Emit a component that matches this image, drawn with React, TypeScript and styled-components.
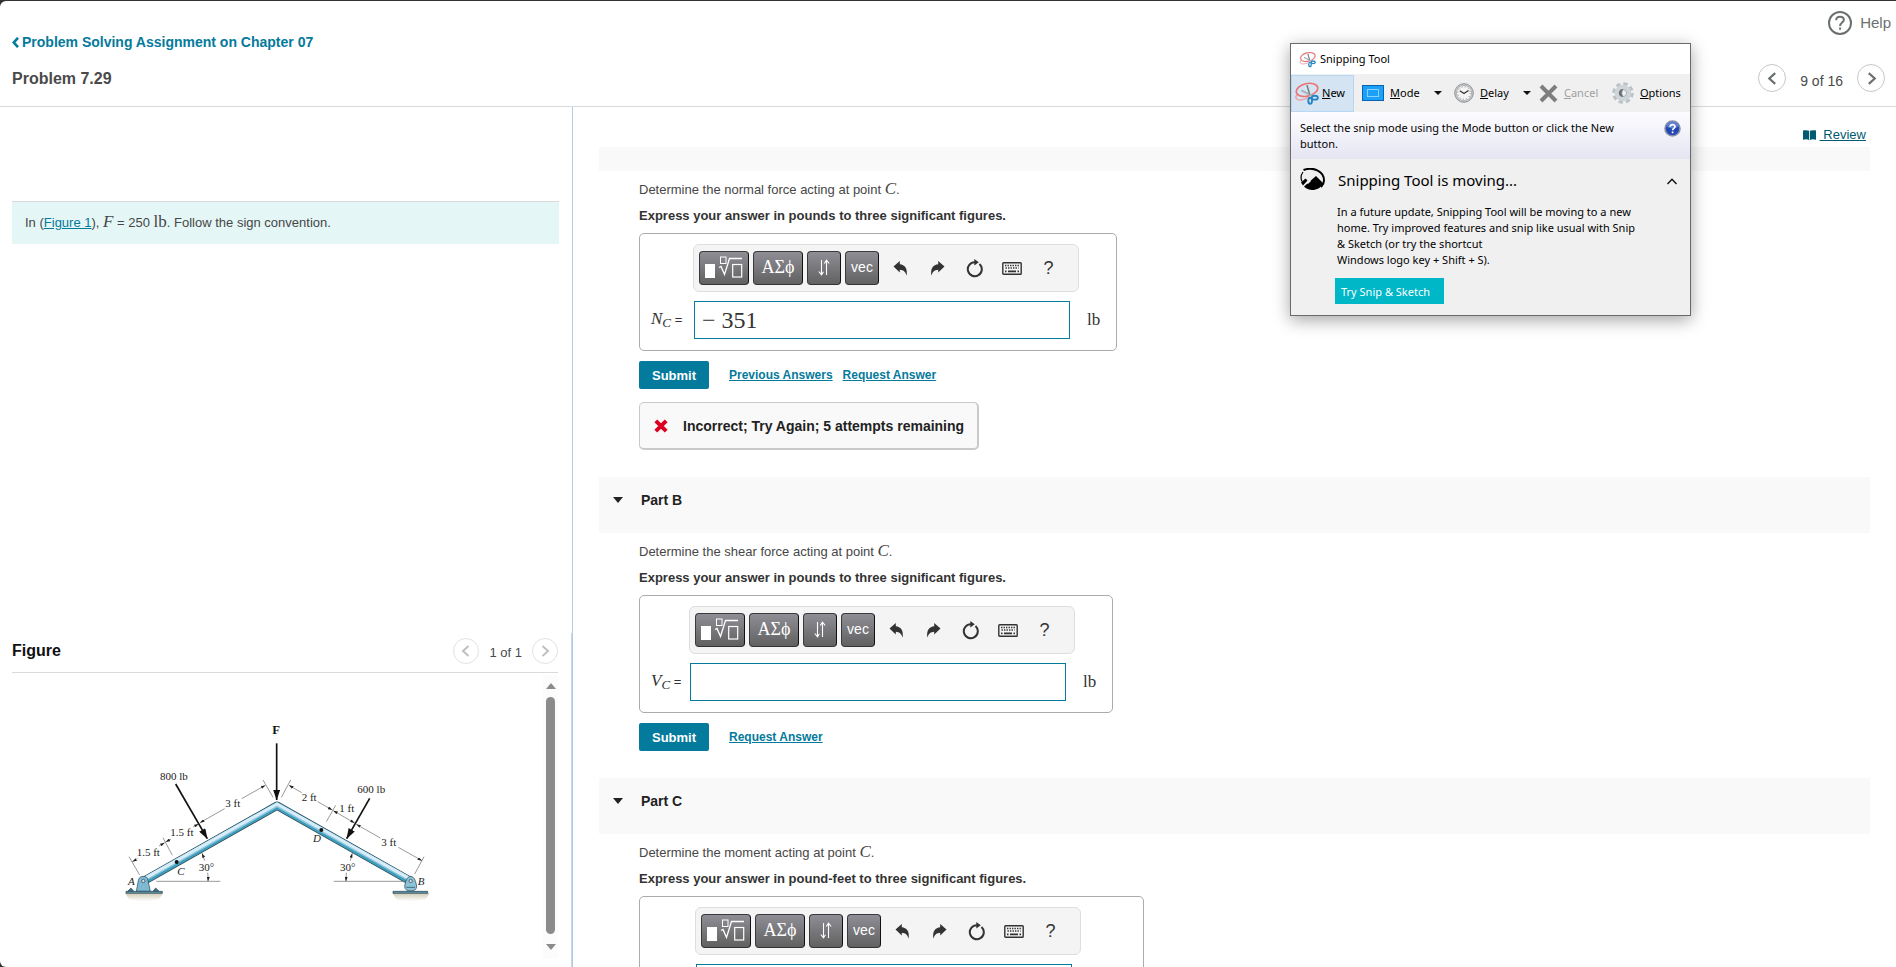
import React from 'react';
import styled, { createGlobalStyle } from 'styled-components';

const sans = `"Liberation Sans", Arial, sans-serif`;
const serif = `"Liberation Serif", "Times New Roman", serif`;
const teal = '#047a9c';

const GlobalStyle = createGlobalStyle`
  *, *::before, *::after { box-sizing: border-box; }
  body { margin: 0; background: #33302f; font-family: ${sans}; color: #333; }
  button, input { font-family: inherit; }
  h1, h2, h3, p { margin: 0; }
`;

const Page = styled.div`
  display: flex;
  flex-direction: column;
  height: 100vh;
  overflow: hidden;
  border-top: 1px solid #33302f;
`;

const Sheet = styled.div`
  display: flex;
  flex-direction: column;
  flex: 1;
  min-height: 0;
  overflow: hidden;
  background: #fff;
  border-radius: 6px 0 0 6px;
`;

const Header = styled.header`
  display: flex;
  justify-content: space-between;
  flex: none;
  height: 106px;
  border-bottom: 1px solid #dadada;
`;

const HeaderTitles = styled.div`
  padding: 32px 0 0 12px;
`;

const BackLink = styled.a`
  display: flex;
  align-items: center;
  gap: 3px;
  height: 18px;
  font-size: 14px;
  line-height: 18px;
  font-weight: bold;
  color: ${teal};
  text-decoration: none;
`;

const ProblemTitle = styled.h1`
  margin-top: 18px;
  font-size: 16px;
  line-height: 20px;
  color: #4a4a4a;
`;

const HeaderTools = styled.div`
  display: flex;
  flex-direction: column;
  align-items: flex-end;
  gap: 29px;
  padding-top: 10px;
`;

const HelpLink = styled.a`
  display: flex;
  align-items: center;
  gap: 8px;
  padding-right: 5px;
  font-size: 15px;
  line-height: 24px;
  color: #6a7070;
  text-decoration: none;
`;

const Pager = styled.nav<{ $small?: boolean }>`
  display: flex;
  align-items: center;
  gap: ${(p) => (p.$small ? 10 : 14)}px;
  padding-right: ${(p) => (p.$small ? 0 : 11)}px;
  font-size: ${(p) => (p.$small ? 13 : 14)}px;
  line-height: 20px;
  color: #4a4a4a;
`;

const PagerText = styled.span`
  padding-top: 5px;
`;

const RoundButton = styled.button<{ $small?: boolean }>`
  display: flex;
  align-items: center;
  justify-content: center;
  width: ${(p) => (p.$small ? 26 : 28)}px;
  height: ${(p) => (p.$small ? 26 : 28)}px;
  padding: 0;
  border: 1px solid ${(p) => (p.$small ? '#e2e2e2' : '#c7c7c7')};
  border-radius: 50%;
  background: #fff;
  color: ${(p) => (p.$small ? '#c0c0c0' : '#6a7070')};
`;

const Columns = styled.div`
  display: grid;
  grid-template-columns: minmax(0, 573fr) minmax(0, 1323fr);
  flex: 1;
  min-height: 0;
`;

const LeftColumn = styled.aside`
  display: flex;
  flex-direction: column;
  min-height: 0;
  border-right: 1px solid #b5cbdf;
`;

const Statement = styled.div`
  flex: 1;
  padding: 94px 13px 0 12px;
`;

const StatementText = styled.p`
  padding: 9px 13px;
  border-top: 1px solid #dadada;
  background: #e5f6f6;
  font-size: 13px;
  line-height: 24px;
  color: #464646;
`;

const InlineLink = styled.a`
  color: ${teal};
`;

const MathText = styled.span<{ $italic?: boolean }>`
  font-family: ${serif};
  font-size: 17px;
  line-height: 16px;
  font-style: ${(p) => (p.$italic ? 'italic' : 'normal')};
`;

const FigureSection = styled.section`
  display: flex;
  flex-direction: column;
  flex: 0 0 334px;
  padding: 0 13px 8px 12px;
  border-right: 1px solid #c3d5e6;
`;

const FigureHeader = styled.div`
  display: flex;
  align-items: center;
  justify-content: space-between;
  height: 40px;
  padding-bottom: 4px;
  border-bottom: 1px solid #dadada;
`;

const FigureTitle = styled.h2`
  font-size: 16px;
  line-height: 20px;
  color: #111;
`;

const FigureBody = styled.div`
  display: flex;
  flex: 1;
  min-height: 0;
  padding-top: 2px;
`;

const FigureCanvas = styled.div`
  flex: 1;
  padding-top: 35px;
  text-align: center;
`;

const ScrollTrack = styled.div`
  display: flex;
  flex-direction: column;
  align-items: center;
  justify-content: space-between;
  width: 15px;
  padding: 8px 0 9px;
  background: #fcfcfc;
`;

const ScrollThumb = styled.div`
  flex: 1;
  width: 9px;
  margin: 8px 0 10px;
  border-radius: 5px;
  background: #8b8b8b;
`;

const Main = styled.main`
  min-width: 0;
  padding: 0 26px;
  overflow: hidden;
`;

const ReviewRow = styled.div`
  display: flex;
  align-items: center;
  justify-content: flex-end;
  height: 40px;
  padding: 15px 4px 0 0;
`;

const ReviewLink = styled.a`
  display: flex;
  align-items: center;
  gap: 4px;
  font-size: 13px;
  line-height: 20px;
  color: #005a70;
  span { text-decoration: underline; white-space: pre; }
`;

const PartBand = styled.div<{ $short?: boolean }>`
  display: flex;
  height: ${(p) => (p.$short ? 24 : 56)}px;
  padding: 13px 14px 0;
  background: #f9f9f9;
`;

const PartToggle = styled.button`
  display: flex;
  align-items: center;
  gap: 18px;
  height: 20px;
  padding: 0;
  border: 0;
  background: none;
  font-size: 14px;
  line-height: 20px;
  font-weight: bold;
  color: #222;
`;

const PartBody = styled.section`
  padding: 6px 0 27px 40px;
`;

const Prompt = styled.p<{ $strong?: boolean }>`
  font-size: 13px;
  line-height: 26px;
  font-weight: ${(p) => (p.$strong ? 'bold' : 'normal')};
  color: ${(p) => (p.$strong ? '#333' : '#464646')};
`;

const AnswerBox = styled.div<{ $label: number }>`
  display: inline-grid;
  grid-template-columns: ${(p) => p.$label}px 377px auto;
  row-gap: 9px;
  align-items: center;
  margin-top: 4px;
  padding: 10px 0 11px;
  border: 1px solid #ababab;
  border-radius: 5px;
  vertical-align: top;
`;

const Toolbar = styled.div`
  grid-column: 2 / span 2;
  display: flex;
  align-items: center;
  gap: 4px;
  width: 386px;
  height: 48px;
  padding: 0 5px;
  border: 1px solid #dedede;
  border-radius: 6px;
  background: #f4f4f4;
`;

const PaletteButton = styled.button<{ $wide?: boolean; $serif?: boolean }>`
  display: flex;
  align-items: center;
  justify-content: center;
  width: ${(p) => (p.$wide ? 50 : 34)}px;
  height: 34px;
  padding: 0 0 2px;
  border: 1px solid #3a3a3c;
  border-right-color: #111;
  border-bottom-color: #333;
  border-radius: 4px;
  background: linear-gradient(#8f8e96, #616161);
  color: #fff;
  font-family: ${(p) => (p.$serif ? serif : sans)};
  font-size: ${(p) => (p.$serif ? 18 : 14)}px;
  line-height: 20px;
`;

const ToolButton = styled.button`
  display: flex;
  align-items: center;
  justify-content: center;
  width: 33px;
  height: 34px;
  padding: 0 0 0 2px;
  border: 0;
  background: none;
  color: #333;
  font-size: 18px;
  line-height: 20px;
`;

const AnswerLabel = styled.label`
  padding-left: 11px;
  font-size: 13px;
  line-height: 20px;
  white-space: nowrap;
  sub { font-size: 13px; line-height: 10px; vertical-align: -3px; }
`;

const AnswerInput = styled.input`
  height: 38px;
  min-width: 0;
  margin-left: 1px;
  padding: 0 7px;
  border: 1px solid ${teal};
  background: #fff;
  font-family: ${serif};
  font-size: 24px;
  color: #333;
`;

const Unit = styled.span`
  padding: 0 16px 0 17px;
  font-family: ${serif};
  font-size: 17px;
  line-height: 20px;
`;

const Actions = styled.div`
  display: flex;
  align-items: center;
  margin-top: 10px;
`;

const SubmitButton = styled.button`
  width: 70px;
  height: 28px;
  margin-right: 20px;
  padding: 0;
  border: 0;
  border-radius: 2px;
  background: ${teal};
  color: #fff;
  font-size: 13px;
  font-weight: bold;
`;

const ActionLink = styled.a`
  margin-right: 10px;
  font-size: 12px;
  line-height: 16px;
  font-weight: bold;
  color: ${teal};
`;

const Feedback = styled.div`
  display: flex;
  align-items: center;
  gap: 15px;
  width: fit-content;
  height: 48px;
  margin-top: 13px;
  padding: 1px 13px 0 14px;
  border: 1px solid #c9c9c9;
  border-right-width: 2px;
  border-bottom-width: 2px;
  border-radius: 5px;
  background: #f9f9f9;
  font-size: 14px;
  line-height: 20px;
  font-weight: bold;
  color: #222;
`;

/* Snipping Tool window */

const SnipWindow = styled.section`
  position: absolute;
  top: 43px;
  right: 205px;
  width: 401px;
  border: 1px solid #6a6a6a;
  background: #f0f0f0;
  box-shadow: 0 4px 16px rgba(0, 0, 0, 0.36);
  font-family: "Noto Sans", "Segoe UI", sans-serif;
  font-size: 11px;
  line-height: 16px;
  color: #000;
`;

const SnipTitle = styled.div`
  display: flex;
  align-items: center;
  gap: 4px;
  height: 30px;
  padding-left: 8px;
  background: #fff;
`;

const SnipToolbar = styled.div`
  display: flex;
  align-items: center;
  height: 38px;
`;

const SnipButton = styled.button<{ $width: number; $pad: number; $active?: boolean }>`
  display: flex;
  align-items: center;
  gap: ${(p) => (p.$active ? 3 : 6)}px;
  width: ${(p) => p.$width}px;
  height: 37px;
  padding: 0 0 0 ${(p) => p.$pad}px;
  border: ${(p) => (p.$active ? '1px solid #b7d6f2' : '0')};
  background: ${(p) => (p.$active ? '#d5e4f2' : 'none')};
  font-size: 11px;
  line-height: 16px;
  white-space: nowrap;
  color: #000;
  svg { flex: none; }
  &:disabled { color: #a0a0a0; }
`;

const SnipCaret = styled.span`
  margin-left: auto;
  border: 4px solid transparent;
  border-top-color: #111;
  border-bottom: 0;
`;

const SnipHint = styled.div`
  display: flex;
  justify-content: space-between;
  height: 47px;
  padding: 8px 9px 0;
  background: linear-gradient(#fdfdff, #e4e5f2);
`;

const SnipHintText = styled.p`
  width: 345px;
`;

const SnipBody = styled.div`
  display: grid;
  grid-template-columns: 35px 1fr 23px;
  padding: 9px 0 11px 9px;
`;

const SnipHeading = styled.h3`
  padding-left: 3px;
  font-size: 15px;
  line-height: 24px;
  font-weight: normal;
`;

const SnipCollapse = styled.button`
  width: 10px;
  height: 24px;
  padding: 0;
  border: 0;
  background: none;
`;

const SnipCopy = styled.p`
  grid-column: 2 / span 2;
  margin-top: 12px;
  padding-left: 2px;
`;

const SnipTry = styled.button`
  grid-column: 2;
  justify-self: start;
  width: 109px;
  height: 26px;
  margin-top: 10px;
  padding: 0 0 0 6px;
  border: 0;
  background: #00b7c7;
  color: #fff;
  font-size: 11px;
  text-align: left;
  white-space: nowrap;
`;

const Chevron = ({ right, size = 12 }: { right?: boolean; size?: number }) => (
  <svg width={size} height={size} viewBox="0 0 12 12" fill="none" stroke="currentColor" strokeWidth="2" aria-hidden="true">
    <path d={right ? 'M3.5 1 9 6 3.5 11' : 'M8.5 1 3 6 8.5 11'} />
  </svg>
);

const BackIcon = () => (
  <svg width="7" height="11" viewBox="0 0 7 11" fill="none" stroke="currentColor" strokeWidth="2.6" aria-hidden="true">
    <path d="M6 .8 1.8 5.5 6 10.2" />
  </svg>
);

const HelpIcon = () => (
  <svg width="24" height="24" viewBox="0 0 24 24" fill="none" stroke="#6a7070" aria-hidden="true">
    <circle cx="12" cy="12" r="11" strokeWidth="2" />
    <path d="M8.2 9.2C8.2 6.9 9.8 5.7 12 5.7s3.8 1.3 3.8 3.2c0 2.6-3.7 2.7-3.7 6" strokeWidth="2" />
    <path d="M12.1 16.6v2.2" strokeWidth="2" />
  </svg>
);

const BookIcon = () => (
  <svg width="13" height="10" viewBox="0 0 13 10" fill="#005a70" aria-hidden="true">
    <path d="M0 .6C2 0 4.500 0 6.100.8V9.900C4.500 9 2 9 0 9.700ZM13 .6C11 0 8.500 0 6.900.8V9.900C8.500 9 11 9 13 9.700Z" />
  </svg>
);

const Triangle = ({ up, color = '#222' }: { up?: boolean; color?: string }) => (
  <svg width="10" height="6" viewBox="0 0 10 6" fill={color} aria-hidden="true">
    <path d={up ? 'M5 0 10 6H0Z' : 'M0 0H10L5 6Z'} />
  </svg>
);

const RootIcon = () => (
  <svg width="38" height="22" viewBox="0 0 38 22" fill="none" stroke="#fff" aria-hidden="true">
    <rect x="0" y="8" width="10" height="14" fill="#fff" stroke="none" />
    <rect x="15.500" y="1" width="5.500" height="6.500" strokeWidth="1" />
    <path d="M14 11.500 16 10.500 19.500 18.500 24.500 2.500H37" strokeWidth="1.300" />
    <rect x="27.700" y="8.500" width="9" height="12.500" strokeWidth="1.200" />
  </svg>
);

const UpDownIcon = () => (
  <svg width="12" height="17" viewBox="0 0 12 17" fill="none" stroke="#fff" strokeWidth="1.100" aria-hidden="true">
    <path d="M3.500 1V15.500M.8 12.500 3.500 15.800 5.500 12.800M8.500 16V1.500M6.300 4.500 8.500 1.200 11.200 4.500" />
  </svg>
);

const ArrowIcon = ({ flip }: { flip?: boolean }) => (
  <svg width="15" height="15" viewBox="0 0 15 15" fill="#333" aria-hidden="true">
    <path
      transform={flip ? 'translate(15 0) scale(-1 1)' : undefined}
      d="M.5 5.500 6.800 0V3.200C11.500 3.600 14.800 7 13.600 14.800 12.400 10.500 10.300 9 6.800 8.800V11.500Z"
    />
  </svg>
);

const ResetIcon = () => (
  <svg width="18" height="19" viewBox="0 0 18 19" fill="none" aria-hidden="true">
    <path d="M13.500 5A7 7 0 1 1 9 3.200" stroke="#333" strokeWidth="2" />
    <path d="M8.300 0 12.800 3.300 8.300 6.400Z" fill="#333" />
  </svg>
);

const KeyboardIcon = () => (
  <svg width="20" height="13" viewBox="0 0 20 13" fill="none" stroke="#333" aria-hidden="true">
    <rect x=".8" y=".8" width="18.400" height="11.400" rx=".8" strokeWidth="1.400" />
    <path d="M3 3.500H17.500M3.500 6H16.500" strokeWidth="1.500" strokeDasharray="1.400 1.100" />
    <path d="M3 9.300H4.500M6 9.300H14M15.500 9.300H17" strokeWidth="1.700" />
  </svg>
);

const CrossIcon = () => (
  <svg width="14" height="14" viewBox="0 0 14 14" stroke="#db0020" strokeWidth="4" aria-hidden="true">
    <path d="M1.800 1.800 12.200 12.200M12.200 1.800 1.800 12.200" />
  </svg>
);

const ScissorsIcon = ({ size }: { size: number }) => (
  <svg width={size} height={size} viewBox="0 0 24 24" fill="none" aria-hidden="true">
    <ellipse cx="12.500" cy="8.500" rx="10.500" ry="6" transform="rotate(-14 12.500 8.500)" stroke="#ea7478" strokeWidth="1.600" />
    <path d="M3 13C0 16.500 3 18.800 7 18.200S12 17 13.500 15.500" stroke="#ee9a9c" strokeWidth="1.200" />
    <path d="M12.500 4 15.500 14.500M7 9 18 14.500" stroke="#a9b1b7" strokeWidth="1.800" />
    <path d="M12.500 4 15 13" stroke="#5b646b" strokeWidth=".8" />
    <ellipse cx="15.500" cy="19" rx="1.800" ry="2.900" stroke="#2585c4" strokeWidth="1.800" />
    <ellipse cx="20" cy="16" rx="2.900" ry="1.900" stroke="#2585c4" strokeWidth="1.800" />
  </svg>
);

const ModeIcon = () => (
  <svg width="22" height="16" viewBox="0 0 22 16" fill="none" aria-hidden="true">
    <rect x=".5" y=".5" width="21" height="15" fill="#1ba1f9" stroke="#0a63b0" />
    <rect x="5.500" y="4.500" width="11" height="7" stroke="#fff" strokeDasharray="1 1" />
  </svg>
);

const ClockIcon = () => (
  <svg width="20" height="20" viewBox="0 0 20 20" fill="none" aria-hidden="true">
    <circle cx="10" cy="10" r="9.300" fill="#c9cdd0" stroke="#8d9194" strokeWidth="1" />
    <circle cx="10" cy="10" r="7.600" fill="#f4f4f2" stroke="#a7abad" strokeWidth=".8" />
    <circle cx="10" cy="10" r="6.200" stroke="#8a8a8a" strokeWidth="1" strokeDasharray="1 2.246" />
    <path d="M5.800 7.800 10 10.500 14.500 7.500" stroke="#333" strokeWidth="1.300" />
  </svg>
);

const CancelIcon = () => (
  <svg width="19" height="19" viewBox="0 0 19 19" stroke="#7e7e7e" strokeWidth="4" aria-hidden="true">
    <path d="M2 2 17 17M17 2 2 17" />
  </svg>
);

const GearIcon = () => (
  <svg width="22" height="24" viewBox="0 0 22 24" fill="none" aria-hidden="true">
    <circle cx="11" cy="12" r="8.800" stroke="#b9c2c7" strokeWidth="4" strokeDasharray="4.100 2.812" />
    <circle cx="11" cy="12" r="6.300" fill="#d3dadd" stroke="#cdd5d9" strokeWidth="4" />
    <circle cx="11" cy="12" r="3.600" fill="#f0f0f0" stroke="#aab3b8" strokeWidth="1" />
    <path d="M10.800 8.400A3.600 3.600 0 0 0 10.800 15.600 6 6 0 0 1 10.800 8.400Z" fill="#5d676d" stroke="#6d777d" strokeWidth=".8" />
  </svg>
);

const SnipHelpIcon = () => (
  <svg width="17" height="17" viewBox="0 0 17 17" fill="none" aria-hidden="true">
    <circle cx="8.500" cy="8.500" r="7.500" fill="#2346b5" stroke="#8d93a8" strokeWidth="1.600" />
    <path d="M2.500 6.500A6.200 6.200 0 0 1 14.500 6.500C11 9 6 9 2.500 6.500Z" fill="#5f7fd6" />
    <path d="M6.200 6.800C6.200 3.900 11 3.900 11 6.600 11 8.500 8.600 8.300 8.600 10.300M8.600 11.500V13.200" stroke="#fff" strokeWidth="1.700" />
  </svg>
);

const SketchIcon = () => (
  <svg width="25" height="22" viewBox="0 0 25 22" fill="none" aria-hidden="true">
    <path d="M3 4A9.500 9.500 0 0 0 2 13.500" stroke="#000" strokeWidth="1.200" />
    <path d="M3.500 2C13-1.500 24 3 24 12.500 24 15.500 22.500 17.500 21 19" stroke="#000" strokeWidth="2" />
    <path d="M1 14.500 5.500 10.500 7.500 12.500 3 17.500ZM4 18.500 16 8 23 15C21 20 16.500 22 12.500 22 9 22 6 20.800 4 18.500Z" fill="#000" />
    <path d="M7.500 15.500 10.500 12.500" stroke="#f0f0f0" strokeWidth="1.500" />
  </svg>
);

const FrameDiagram = () => {
  const ink = '#222';
  return (
    <svg width="340" height="200" viewBox="-5 0 1020 600" fill="none" role="img" aria-label="Two-member frame with applied loads">
      <defs>
        <marker id="dim" viewBox="0 0 12 8" refX="12" refY="4" markerWidth="14" markerHeight="9" markerUnits="userSpaceOnUse" orient="auto">
          <path d="M0 0 12 4 0 8Z" fill={ink} />
        </marker>
        <marker id="force" viewBox="0 0 30 20" refX="29" refY="10" markerWidth="32" markerHeight="21" markerUnits="userSpaceOnUse" orient="auto">
          <path d="M0 0 30 10 0 20Z" fill="#111" />
        </marker>
        <linearGradient id="ground" x1="0" y1="0" x2="0" y2="1">
          <stop offset="0" stopColor="#d2cdb8" />
          <stop offset="1" stopColor="#fff" />
        </linearGradient>
      </defs>

      <path d="M46 550H160L148 568Q100 580 58 568Z" fill="url(#ground)" />
      <path d="M848 550H960L948 568Q900 580 860 568Z" fill="url(#ground)" />

      <g strokeLinejoin="round">
        <path d="M104 512 502 287 900 512" stroke="#2b3a42" strokeWidth="25" />
        <path d="M104 512 502 287 900 512" stroke="#3c9dbb" strokeWidth="21" />
        <path d="M104 508 502 284 900 508" stroke="#8cc6dd" strokeWidth="14" />
        <path d="M104 506 502 282 900 506" stroke="#d9ecfa" strokeWidth="9" />
      </g>

      <g stroke="#24404c" strokeWidth="2">
        <path d="M80 544 86 512Q88 499 101 499T115 512L122 544Z" fill="#7db9d3" />
        <path d="M54 544 64 534 72 544ZM130 544 138 534 148 544Z" fill="#41788e" />
        <path d="M49 544H158V550H49Z" fill="#5d93a8" />
        <path d="M885 528Q890 499 903 499T921 528Q921 543 903 543T885 528Z" fill="#8cc3d9" />
        <path d="M890 532H916" />
        <path d="M850 544H954V550H850Z" fill="#5d93a8" />
        <circle cx="101" cy="513" r="5" fill="#ddd" />
        <circle cx="903" cy="513" r="5" fill="#ddd" />
      </g>

      <circle cx="201" cy="456" r="6" fill="#111" />
      <circle cx="635" cy="360" r="6" fill="#111" />

      <g stroke="#666" strokeWidth="2">
        <path d="M58 440 90 495M160 383 188 436M460 210 490 262M543 210 515 262M678 286 650 335M943 440 915 492" />
        <path d="M140 514H332M672 514H884" />
      </g>

      <g stroke="#666" strokeWidth="2">
        <path d="M84 446 68 455" markerEnd="url(#dim)" />
        <path d="M148 408 165 398" markerEnd="url(#dim)" />
        <path d="M184 387 168 396" markerEnd="url(#dim)" />
        <path d="M250 351 267 342" markerEnd="url(#dim)" />
        <path d="M345 296 271 338" markerEnd="url(#dim)" />
        <path d="M396 266 467 226" markerEnd="url(#dim)" />
        <path d="M576 248 538 226" markerEnd="url(#dim)" />
        <path d="M624 275 668 300" markerEnd="url(#dim)" />
        <path d="M690 313 671 302" markerEnd="url(#dim)" />
        <path d="M690 313 735 339" markerEnd="url(#dim)" />
        <path d="M812 384 740 343" markerEnd="url(#dim)" />
        <path d="M866 412 937 452" markerEnd="url(#dim)" />
        <path d="M285 452Q282 442 277 430" markerEnd="url(#dim)" />
        <path d="M294 488Q296 500 295 514" markerEnd="url(#dim)" />
        <path d="M722 452Q724 442 728 430" markerEnd="url(#dim)" />
        <path d="M710 488 709 514" markerEnd="url(#dim)" />
      </g>

      <g stroke="#111" strokeWidth="5">
        <path d="M501 100V270" markerEnd="url(#force)" />
        <path d="M198 222 293 386" markerEnd="url(#force)" />
        <path d="M780 265 711 386" markerEnd="url(#force)" />
      </g>

      <g fill={ink} fontFamily={serif} fontSize="33">
        <text x="488" y="73" fontSize="38" fontWeight="bold" fill="#111">F</text>
        <text x="151" y="210">800 lb</text>
        <text x="743" y="250">600 lb</text>
        <text x="81" y="437">1.5 ft</text>
        <text x="182" y="379">1.5 ft</text>
        <text x="347" y="290">3 ft</text>
        <text x="576" y="272">2 ft</text>
        <text x="689" y="307">1 ft</text>
        <text x="815" y="409">3 ft</text>
        <text x="267" y="482">30°</text>
        <text x="691" y="482">30°</text>
        <g fontStyle="italic">
          <text x="55" y="524">A</text>
          <text x="203" y="494">C</text>
          <text x="610" y="397">D</text>
          <text x="924" y="524">B</text>
        </g>
      </g>
    </svg>
  );
};

type AnswerProps = { id: string; symbol: string; unit: string; labelWidth: number; value?: string };

const Answer = ({ id, symbol, unit, labelWidth, value }: AnswerProps) => (
  <AnswerBox $label={labelWidth}>
    <Toolbar role="toolbar" aria-label="Equation tools">
      <PaletteButton $wide aria-label="Templates"><RootIcon /></PaletteButton>
      <PaletteButton $wide $serif>ΑΣϕ</PaletteButton>
      <PaletteButton aria-label="Arrows"><UpDownIcon /></PaletteButton>
      <PaletteButton>vec</PaletteButton>
      <ToolButton aria-label="Undo"><ArrowIcon /></ToolButton>
      <ToolButton aria-label="Redo"><ArrowIcon flip /></ToolButton>
      <ToolButton aria-label="Reset"><ResetIcon /></ToolButton>
      <ToolButton aria-label="Keyboard shortcuts"><KeyboardIcon /></ToolButton>
      <ToolButton>?</ToolButton>
    </Toolbar>
    <AnswerLabel htmlFor={id}>
      <MathText $italic>{symbol}<sub>C</sub></MathText> =
    </AnswerLabel>
    <AnswerInput id={id} type="text" defaultValue={value} />
    <Unit>{unit}</Unit>
  </AnswerBox>
);

const PartHeading = ({ children }: { children: React.ReactNode }) => (
  <PartBand>
    <PartToggle aria-expanded="true"><Triangle />{children}</PartToggle>
  </PartBand>
);

const Prompts = ({ quantity, units }: { quantity: string; units: string }) => (
  <>
    <Prompt>Determine the {quantity} acting at point <MathText $italic>C</MathText>.</Prompt>
    <Prompt $strong>Express your answer in {units} to three significant figures.</Prompt>
  </>
);

const SnippingTool = () => (
  <SnipWindow aria-label="Snipping Tool">
    <SnipTitle><ScissorsIcon size={17} />Snipping Tool</SnipTitle>
    <SnipToolbar>
      <SnipButton $width={63} $pad={2} $active><ScissorsIcon size={25} /><span><u>N</u>ew</span></SnipButton>
      <SnipButton $width={88} $pad={8}><ModeIcon /><span><u>M</u>ode</span><SnipCaret /></SnipButton>
      <SnipButton $width={89} $pad={12}><ClockIcon /><span><u>D</u>elay</span><SnipCaret /></SnipButton>
      <SnipButton $width={71} $pad={8} disabled><CancelIcon /><span><u>C</u>ancel</span></SnipButton>
      <SnipButton $width={84} $pad={10}><GearIcon /><span><u>O</u>ptions</span></SnipButton>
    </SnipToolbar>
    <SnipHint>
      <SnipHintText>Select the snip mode using the Mode button or click the New button.</SnipHintText>
      <SnipHelpIcon />
    </SnipHint>
    <SnipBody>
      <SketchIcon />
      <SnipHeading>Snipping Tool is moving...</SnipHeading>
      <SnipCollapse aria-label="Collapse">
        <svg width="10" height="7" viewBox="0 0 10 7" fill="none" stroke="#111" strokeWidth="1.400" aria-hidden="true">
          <path d="M.5 6 5 1.200 9.500 6" />
        </svg>
      </SnipCollapse>
      <SnipCopy>
        In a future update, Snipping Tool will be moving to a new<br />
        home. Try improved features and snip like usual with Snip<br />
        &amp; Sketch (or try the shortcut<br />
        Windows logo key + Shift + S).
      </SnipCopy>
      <SnipTry>Try Snip &amp; Sketch</SnipTry>
    </SnipBody>
  </SnipWindow>
);

export default function App() {
  return (
    <Page>
      <GlobalStyle />
      <Sheet>
        <Header>
          <HeaderTitles>
            <BackLink href="#assignment"><BackIcon />Problem Solving Assignment on Chapter 07</BackLink>
            <ProblemTitle>Problem 7.29</ProblemTitle>
          </HeaderTitles>
          <HeaderTools>
            <HelpLink href="#help"><HelpIcon />Help</HelpLink>
            <Pager aria-label="Problems">
              <RoundButton aria-label="Previous problem"><Chevron size={13} /></RoundButton>
              <PagerText>9 of 16</PagerText>
              <RoundButton aria-label="Next problem"><Chevron right size={13} /></RoundButton>
            </Pager>
          </HeaderTools>
        </Header>
        <Columns>
          <LeftColumn>
            <Statement>
              <StatementText>
                In (<InlineLink href="#figure">Figure 1</InlineLink>), <MathText $italic>F</MathText> = 250 <MathText>lb</MathText>. Follow the sign convention.
              </StatementText>
            </Statement>
            <FigureSection id="figure">
              <FigureHeader>
                <FigureTitle>Figure</FigureTitle>
                <Pager $small aria-label="Figures">
                  <RoundButton $small aria-label="Previous figure"><Chevron /></RoundButton>
                  <PagerText>1 of 1</PagerText>
                  <RoundButton $small aria-label="Next figure"><Chevron right /></RoundButton>
                </Pager>
              </FigureHeader>
              <FigureBody>
                <FigureCanvas><FrameDiagram /></FigureCanvas>
                <ScrollTrack aria-hidden="true">
                  <Triangle up color="#8b8b8b" />
                  <ScrollThumb />
                  <Triangle color="#8b8b8b" />
                </ScrollTrack>
              </FigureBody>
            </FigureSection>
          </LeftColumn>
          <Main>
            <ReviewRow>
              <ReviewLink href="#review"><BookIcon /><span> Review</span></ReviewLink>
            </ReviewRow>
            <PartBand $short />
            <PartBody>
              <Prompts quantity="normal force" units="pounds" />
              <Answer id="normal" symbol="N" unit="lb" labelWidth={53} value="− 351" />
              <Actions>
                <SubmitButton>Submit</SubmitButton>
                <ActionLink href="#previous">Previous Answers</ActionLink>
                <ActionLink href="#request-a">Request Answer</ActionLink>
              </Actions>
              <Feedback role="status"><CrossIcon />Incorrect; Try Again; 5 attempts remaining</Feedback>
            </PartBody>
            <PartHeading>Part B</PartHeading>
            <PartBody>
              <Prompts quantity="shear force" units="pounds" />
              <Answer id="shear" symbol="V" unit="lb" labelWidth={49} />
              <Actions>
                <SubmitButton>Submit</SubmitButton>
                <ActionLink href="#request-b">Request Answer</ActionLink>
              </Actions>
            </PartBody>
            <PartHeading>Part C</PartHeading>
            <PartBody>
              <Prompts quantity="moment" units="pound-feet" />
              <Answer id="moment" symbol="M" unit="lb · ft" labelWidth={55} />
            </PartBody>
          </Main>
        </Columns>
      </Sheet>
      <SnippingTool />
    </Page>
  );
}
